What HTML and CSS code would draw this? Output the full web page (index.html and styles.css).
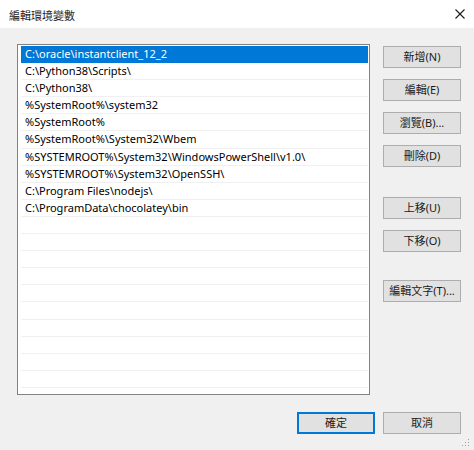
FILE: index.html
```html
<!DOCTYPE html>
<html lang="zh-Hant">
<head>
<meta charset="utf-8">
<title>編輯環境變數</title>
<link rel="stylesheet" href="styles.css">
</head>
<body>
<div class="dialog">
  <div class="titlebar">
    <span class="title">編輯環境變數</span>
    <svg class="close" width="10" height="10" viewBox="0 0 10 10"><path d="M0.5 0.5 L9.5 9.5 M9.5 0.5 L0.5 9.5" stroke="#1a1a1a" stroke-width="1.1" fill="none"/></svg>
  </div>
  <div class="body">
    <div class="main">
      <div class="list">
        <div class="row selected">C:\oracle\instantclient_12_2</div>
        <div class="row">C:\Python38\Scripts\</div>
        <div class="row">C:\Python38\</div>
        <div class="row">%SystemRoot%\system32</div>
        <div class="row">%SystemRoot%</div>
        <div class="row">%SystemRoot%\System32\Wbem</div>
        <div class="row">%SYSTEMROOT%\System32\WindowsPowerShell\v1.0\</div>
        <div class="row">%SYSTEMROOT%\System32\OpenSSH\</div>
        <div class="row">C:\Program Files\nodejs\</div>
        <div class="row">C:\ProgramData\chocolatey\bin</div>
        <div class="row"></div>
        <div class="row"></div>
        <div class="row"></div>
        <div class="row"></div>
        <div class="row"></div>
        <div class="row"></div>
        <div class="row"></div>
        <div class="row"></div>
        <div class="row"></div>
        <div class="row"></div>
        <div class="row"></div>
      </div>
      <div class="side">
        <button class="btn">新增(N)</button>
        <button class="btn">編輯(E)</button>
        <button class="btn">瀏覽(B)...</button>
        <button class="btn">刪除(D)</button>
        <button class="btn group">上移(U)</button>
        <button class="btn">下移(O)</button>
        <button class="btn group2">編輯文字(T)...</button>
      </div>
    </div>
    <div class="footer">
      <button class="btn default">確定</button>
      <button class="btn">取消</button>
    </div>
    <svg class="grip" width="8" height="8" viewBox="0 0 8 8">
      <rect x="6" y="0" width="1" height="1" fill="#a0a0a0"/>
      <rect x="6" y="3" width="1" height="1" fill="#a0a0a0"/>
      <rect x="3" y="3" width="1" height="1" fill="#a0a0a0"/>
      <rect x="6" y="6" width="1" height="1" fill="#a0a0a0"/>
      <rect x="3" y="6" width="1" height="1" fill="#a0a0a0"/>
      <rect x="0" y="6" width="1" height="1" fill="#a0a0a0"/>
    </svg>
  </div>
</div>
</body>
</html>
```
FILE: styles.css
```css
html, body {
  margin: 0;
  padding: 0;
}
body {
  width: 474px;
  height: 450px;
  overflow: hidden;
  background: #f0f0f0;
  font-family: "Noto Sans", "Noto Sans CJK TC", sans-serif;
  color: #000;
}
.dialog {
  width: 474px;
  height: 450px;
  display: flex;
  flex-direction: column;
}
.titlebar {
  height: 28px;
  background: #fff;
  display: flex;
  align-items: center;
  justify-content: space-between;
  padding: 0 9px 0 9px;
  box-sizing: border-box;
}
.title {
  font-family: "Noto Sans CJK TC", sans-serif;
  font-size: 11px;
  color: #1a1a1a;
  margin-top: 1px;
}
.close {
  display: block;
}
.body {
  position: relative;
  flex: 1;
  padding: 16px 13px 0 17px;
}
.main {
  display: flex;
  align-items: flex-start;
}
.list {
  width: 353px;
  height: 351px;
  box-sizing: border-box;
  border: 1px solid #828282;
  background: #fff;
  padding: 1px 1px 0 3px;
  overflow: hidden;
}
.row {
  height: 17.1px;
  line-height: 16.1px;
  box-sizing: border-box;
  border-bottom: 1px solid #f0f0f0;
  padding-left: 4px;
  font-size: 11px;
  white-space: nowrap;
  color: #000;
}
.row.selected {
  background: #0078d7;
  color: #fff;
  border-bottom-color: #0078d7;
}
.side {
  display: flex;
  flex-direction: column;
  gap: 11px;
  margin-left: 13px;
  padding-top: 2px;
}
.btn {
  width: 78px;
  height: 22px;
  box-sizing: border-box;
  background: #e1e1e1;
  border: 1px solid #adadad;
  border-radius: 0;
  padding: 0;
  margin: 0;
  font-family: "Noto Sans", "Noto Sans CJK TC", sans-serif;
  font-size: 11px;
  color: #1a1a1a;
  line-height: 20px;
}
.btn.group {
  margin-top: 19px;
}
.btn.group2 {
  margin-top: 17px;
}
.btn.default {
  border: 2px solid #0078d7;
  line-height: 18px;
}
.footer {
  display: flex;
  justify-content: flex-end;
  gap: 8px;
  margin-top: 17px;
}
.grip {
  position: absolute;
  right: 4px;
  bottom: 3px;
}
```
